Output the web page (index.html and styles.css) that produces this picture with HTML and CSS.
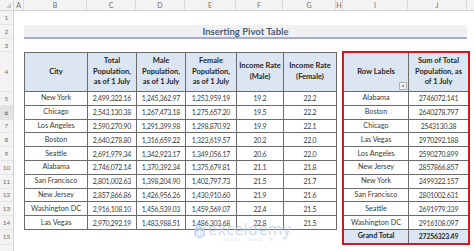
FILE: index.html
```html
<!DOCTYPE html>
<html>
<head>
<meta charset="utf-8">
<link rel="stylesheet" href="styles.css">
</head>
<body>
<div class="sheet">
  <div class="corner"><span class="tri"></span></div>
  <div class="colhead">
    <div class="ch w-a">A</div>
    <div class="ch w-b">B</div>
    <div class="ch w-c">C</div>
    <div class="ch w-d">D</div>
    <div class="ch w-e">E</div>
    <div class="ch w-f">F</div>
    <div class="ch w-g">G</div>
    <div class="ch w-h">H</div>
    <div class="ch w-i">I</div>
    <div class="ch w-j">J</div>
    <div class="ch w-k"></div>
  </div>
  <div class="rowhead">
    <div class="rh h14">1</div>
    <div class="rh h14">2</div>
    <div class="rh h13">3</div>
    <div class="rh h40">4</div>
    <div class="rh hd">5</div>
    <div class="rh hd sel">6</div>
    <div class="rh hd">7</div>
    <div class="rh hd">8</div>
    <div class="rh hd">9</div>
    <div class="rh hd">10</div>
    <div class="rh hd">11</div>
    <div class="rh hd">12</div>
    <div class="rh hd">13</div>
    <div class="rh hd">14</div>
    <div class="rh h15">15</div>
    <div class="rh h14"></div>
  </div>
  <div class="body">
    <div class="row1"></div>
    <div class="title">Inserting Pivot Table</div>
    <div class="row3"></div>
    <div class="tables">
      <table class="data">
        <colgroup><col class="c-b"><col class="c-c"><col class="c-d"><col class="c-e"><col class="c-f"><col class="c-g"></colgroup>
        <thead>
          <tr><th>City</th><th>Total Population, as of 1 July</th><th>Male Population, as of 1 July</th><th>Female Population, as of 1 July</th><th>Income Rate (Male)</th><th>Income Rate (Female)</th></tr>
        </thead>
        <tbody>
          <tr><td>New York</td><td>2,499,322.16</td><td>1,245,362.97</td><td>1,253,959.19</td><td>19.2</td><td>22.2</td></tr>
          <tr><td>Chicago</td><td>2,543,130.38</td><td>1,267,473.18</td><td>1,275,657.20</td><td>19.5</td><td>22.2</td></tr>
          <tr><td>Los Angeles</td><td>2,590,270.90</td><td>1,291,399.98</td><td>1,298,870.92</td><td>19.9</td><td>22.1</td></tr>
          <tr><td>Boston</td><td>2,640,278.80</td><td>1,316,659.22</td><td>1,323,619.57</td><td>20.2</td><td>22.0</td></tr>
          <tr><td>Seattle</td><td>2,691,979.34</td><td>1,342,923.17</td><td>1,349,056.17</td><td>20.6</td><td>22.0</td></tr>
          <tr><td>Alabama</td><td>2,746,072.14</td><td>1,370,392.34</td><td>1,375,679.81</td><td>21.1</td><td>21.8</td></tr>
          <tr><td>San Francisco</td><td>2,801,002.63</td><td>1,398,204.90</td><td>1,402,797.73</td><td>21.5</td><td>21.7</td></tr>
          <tr><td>New Jersey</td><td>2,857,866.86</td><td>1,426,956.26</td><td>1,430,910.60</td><td>21.9</td><td>21.6</td></tr>
          <tr><td>Washington DC</td><td>2,916,108.10</td><td>1,456,539.03</td><td>1,459,569.07</td><td>22.4</td><td>21.5</td></tr>
          <tr><td>Las Vegas</td><td>2,970,292.19</td><td>1,483,988.51</td><td>1,486,303.68</td><td>22.8</td><td>21.5</td></tr>
        </tbody>
      </table>
      <table class="data pivot">
        <colgroup><col class="c-i"><col class="c-j"></colgroup>
        <thead>
          <tr><th class="rl">Row Labels<span class="filter"><svg viewBox="0 0 8 8" width="8" height="8"><path d="M2.5 3.5 L5.5 3.5 L4 5.2 Z" fill="#555"/></svg></span></th><th>Sum of Total Population, as of 1 July</th></tr>
        </thead>
        <tbody>
          <tr><td>Alabama</td><td>2746072.141</td></tr>
          <tr><td>Boston</td><td>2640278.797</td></tr>
          <tr><td>Chicago</td><td>2543130.38</td></tr>
          <tr><td>Las Vegas</td><td>2970292.188</td></tr>
          <tr><td>Los Angeles</td><td>2590270.899</td></tr>
          <tr><td>New Jersey</td><td>2857866.857</td></tr>
          <tr><td>New York</td><td>2499322.157</td></tr>
          <tr><td>San Francisco</td><td>2801002.631</td></tr>
          <tr><td>Seattle</td><td>2691979.339</td></tr>
          <tr><td>Washington DC</td><td>2916108.097</td></tr>
          <tr class="total"><td>Grand Total</td><td>27256323.49</td></tr>
        </tbody>
      </table>
    </div>
    <div class="watermark">
      <svg class="wm-logo" viewBox="0 0 14 16" width="13" height="16">
        <path d="M1 4 L7 1 L13 4 L13 12 L7 15 L1 12 Z" fill="#b9cbe6"/>
        <rect x="4" y="8" width="1.6" height="4" fill="#fff"/>
        <rect x="6.3" y="6" width="1.6" height="6" fill="#fff"/>
        <rect x="8.6" y="7" width="1.6" height="5" fill="#fff"/>
      </svg>
      <div class="wm-text">
        <div class="wm-name">exceldemy</div>
        <div class="wm-sub">EXCEL · DATA · BI</div>
      </div>
    </div>
  </div>
</div>
</body>
</html>
```

FILE: styles.css
```css
html, body {
  margin: 0;
  padding: 0;
  background: #ffffff;
}
body {
  width: 474px;
  height: 251px;
  overflow: hidden;
  font-family: Lato, "Open Sans", sans-serif;
  color: #333333;
}
.sheet {
  display: grid;
  grid-template-columns: 14px 1fr;
  grid-template-rows: 11px 1fr;
  width: 474px;
  height: 251px;
}
.corner {
  background: #f3f3f3;
  border-right: 1px solid #d4d4d4;
  border-bottom: 1px solid #d4d4d4;
  box-sizing: border-box;
  position: relative;
}
.tri {
  position: absolute;
  right: 2px;
  bottom: 2px;
  width: 0;
  height: 0;
  border-left: 5px solid transparent;
  border-bottom: 5px solid #c8c8c8;
}
.colhead {
  display: flex;
  background: #f3f3f3;
  border-bottom: 1px solid #d4d4d4;
  box-sizing: border-box;
}
.ch {
  flex: none;
  box-sizing: border-box;
  border-right: 1px solid #dadada;
  font-size: 7px;
  color: #6e6e6e;
  display: flex;
  align-items: center;
  justify-content: center;
  height: 10px;
}
.w-a { width: 10px; }
.w-b { width: 63px; }
.w-c { width: 49px; }
.w-d { width: 49px; }
.w-e { width: 51px; }
.w-f { width: 47px; }
.w-g { width: 53px; }
.w-h { width: 7px; }
.w-i { width: 65px; }
.w-j { width: 59px; }
.w-k { flex: 1; border-right: none; }
.rowhead {
  display: flex;
  flex-direction: column;
  background: #f3f3f3;
  border-right: 1px solid #d4d4d4;
  box-sizing: border-box;
}
.rh {
  flex: none;
  box-sizing: border-box;
  font-size: 6.5px;
  color: #6e6e6e;
  display: flex;
  align-items: center;
  justify-content: center;
  border-bottom: 1px solid #e4e4e4;
}
.rh.sel { background: #e3e3e3; color: #444; }
.h14 { height: 14px; }
.h15 { height: 15px; }
.h13 { height: 13px; }
.h40 { height: 40px; }
.hd { height: 13.8px; }
.body {
  position: relative;
  padding-left: 10px;
}
.row1 { height: 14px; }
.title {
  width: 443px;
  height: 12px;
  background: #f1f1f3;
  border-bottom: 2px solid #a4abd8;
  font-size: 9.5px;
  font-weight: 700;
  color: #4d5b76;
  display: flex;
  align-items: center;
  justify-content: center;
}
.row3 { height: 13px; }
.tables {
  display: flex;
  align-items: flex-start;
  gap: 6px;
}
table.data {
  border-collapse: collapse;
  table-layout: fixed;
  font-size: 7.2px;
}
.c-b { width: 63px; }
.c-c { width: 49px; }
.c-d { width: 49px; }
.c-e { width: 51px; }
.c-f { width: 47px; }
.c-g { width: 53px; }
.c-i { width: 65px; }
.c-j { width: 60px; }
table.data th,
table.data td {
  border: 1px solid #6b6b6b;
  padding: 0;
  text-align: center;
  overflow: hidden;
  white-space: nowrap;
}
table.data th {
  background: #dce6f2;
  font-weight: 700;
  font-size: 7.5px;
  color: #262626;
  white-space: normal;
  line-height: 10.7px;
  height: 39px;
  padding: 0 2px;
  box-sizing: border-box;
}
table.data td {
  height: 12.8px;
  line-height: 12px;
  color: #3a3a3a;
}
table.data td + td {
  font-size: 6.9px;
  letter-spacing: -0.2px;
}
table.pivot {
  outline: 2px solid #d9141f;
  outline-offset: -1px;
}
th.rl { position: relative; }
.filter {
  position: absolute;
  right: 1px;
  bottom: 1px;
  width: 8px;
  height: 8px;
  box-sizing: border-box;
  border: 1px solid #b0b0b0;
  background: #f4f4f4;
  display: flex;
}
.filter svg { display: block; margin: -1px; }
tr.total td {
  background: #dce6f2;
  font-weight: 700;
  color: #262626;
}
.watermark {
  position: absolute;
  left: 179px;
  top: 211px;
  display: flex;
  align-items: flex-start;
  gap: 2px;
  opacity: 0.7;
}
.wm-logo { margin-top: 2px; }
.wm-text { display: flex; flex-direction: column; align-items: center; }
.wm-name {
  font-family: "Open Sans", sans-serif;
  font-size: 16px;
  line-height: 15px;
  color: #b7c9e6;
  letter-spacing: 0.4px;
}
.wm-sub {
  font-size: 4px;
  color: #c2cfe3;
  letter-spacing: 1.2px;
  line-height: 6px;
}
```
